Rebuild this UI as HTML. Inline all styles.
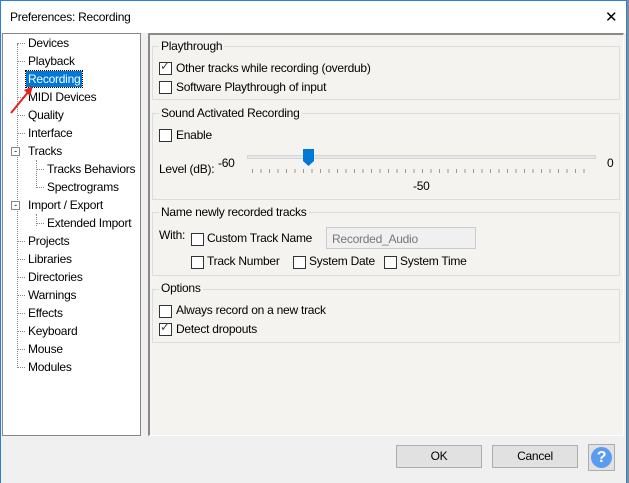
<!DOCTYPE html>
<html><head><style>
*{margin:0;padding:0;box-sizing:border-box}
body{width:629px;height:483px;background:#8a8a8a;font-family:"Liberation Sans",sans-serif;font-size:12px;letter-spacing:-0.25px;color:#000;position:relative;overflow:hidden}
.win{position:absolute;left:0;top:0;width:627px;height:483px;background:#f0f0f0;border:1px solid #2b7fd6;border-bottom:none}
.title{position:absolute;left:0;top:0;width:625px;height:32px;background:#fff}
.a{position:absolute;white-space:nowrap}
.tree{position:absolute;left:1px;top:32px;width:139px;height:403px;background:#fff;border:1px solid #828790}
.panel{position:absolute;left:147px;top:32px;width:476px;height:403px;background:#f4f3f0;border-top:2px solid #8a8a8a;border-left:2px solid #8a8a8a;border-right:1px solid #fff;border-bottom:1px solid #fff}
.grp{position:absolute;border:1px solid #dcdcdc}
.gl{position:absolute;background:#f4f3f0;padding:0 2px}
.cb{position:absolute;width:13px;height:13px;border:1px solid #333;background:#fff}
.dl{position:absolute;border-left:1px dotted #888}
.dh{position:absolute;border-top:1px dotted #888;width:8px}
.btn{position:absolute;height:23px;background:#e1e1e1;border:1px solid #adadad;text-align:center;line-height:21px}
</style></head><body>
<div class="win">
<div class="title"><div class="a" style="left:9px;top:9px;font-size:12px">Preferences: Recording</div>
<div class="a" style="left:604px;top:7px;font-size:15px">✕</div></div>
<div class="tree">
<div class="dl" style="left:14px;top:10px;height:324px"></div>
<div class="dl" style="left:33px;top:126px;height:28px"></div>
<div class="dl" style="left:33px;top:180px;height:12px"></div>
</div>
<div class="dh" style="left:16px;top:42px"></div><div class="dh" style="left:16px;top:60px"></div><div class="dh" style="left:16px;top:96px"></div><div class="dh" style="left:16px;top:114px"></div><div class="dh" style="left:16px;top:132px"></div><div class="dh" style="left:35px;top:168px"></div><div class="dh" style="left:35px;top:186px"></div><div class="dh" style="left:35px;top:222px"></div><div class="dh" style="left:16px;top:240px"></div><div class="dh" style="left:16px;top:258px"></div><div class="dh" style="left:16px;top:276px"></div><div class="dh" style="left:16px;top:294px"></div><div class="dh" style="left:16px;top:312px"></div><div class="dh" style="left:16px;top:330px"></div><div class="dh" style="left:16px;top:348px"></div><div class="dh" style="left:16px;top:366px"></div>
<div class="a" style="left:10px;top:146px;width:9px;height:9px;border:1px solid #888;background:#fff;font-size:9px;line-height:6px;text-align:center">-</div>
<div class="a" style="left:10px;top:200px;width:9px;height:9px;border:1px solid #888;background:#fff;font-size:9px;line-height:6px;text-align:center">-</div>
<div class="a" style="left:27px;top:35px">Devices</div>
<div class="a" style="left:27px;top:53px">Playback</div>
<div class="a" style="left:25px;top:70px;background:#0078d7;color:#fff;padding:1px 2px;outline:1px dotted #000">Recording</div>
<div class="a" style="left:27px;top:89px">MIDI Devices</div>
<div class="a" style="left:27px;top:107px">Quality</div>
<div class="a" style="left:27px;top:125px">Interface</div>
<div class="a" style="left:27px;top:143px">Tracks</div>
<div class="a" style="left:46px;top:161px">Tracks Behaviors</div>
<div class="a" style="left:46px;top:179px">Spectrograms</div>
<div class="a" style="left:27px;top:197px">Import / Export</div>
<div class="a" style="left:46px;top:215px">Extended Import</div>
<div class="a" style="left:27px;top:233px">Projects</div>
<div class="a" style="left:27px;top:251px">Libraries</div>
<div class="a" style="left:27px;top:269px">Directories</div>
<div class="a" style="left:27px;top:287px">Warnings</div>
<div class="a" style="left:27px;top:305px">Effects</div>
<div class="a" style="left:27px;top:323px">Keyboard</div>
<div class="a" style="left:27px;top:341px">Mouse</div>
<div class="a" style="left:27px;top:359px">Modules</div>
<svg class="a" style="left:8px;top:84px" width="26" height="30"><line x1="2" y1="28" x2="20" y2="6" stroke="#e52020" stroke-width="2"/><polygon points="24,1 15,5 21,11" fill="#e52020"/></svg>
<div class="panel"></div>
<div class="grp" style="left:151px;top:45px;width:468px;height:54px"></div>
<div class="gl a" style="left:158px;top:38px">Playthrough</div>
<div class="cb" style="left:158px;top:61px"></div><div class="a" style="left:159px;top:58px;color:#444;font-size:12px">✓</div>
<div class="a" style="left:175px;top:60px">Other tracks while recording (overdub)</div>
<div class="cb" style="left:158px;top:80px"></div><div class="a" style="left:175px;top:79px">Software Playthrough of input</div>
<div class="grp" style="left:151px;top:112px;width:468px;height:87px"></div>
<div class="gl a" style="left:158px;top:105px">Sound Activated Recording</div>
<div class="cb" style="left:158px;top:128px"></div><div class="a" style="left:175px;top:127px">Enable</div>
<div class="a" style="left:158px;top:161px">Level (dB):</div>
<div class="a" style="left:217px;top:155px">-60</div>
<div class="a" style="left:606px;top:155px">0</div>
<div class="a" style="left:246px;top:154px;width:349px;height:4px;background:#e7e7e7;border:1px solid #d6d6d6"></div>
<div class="a" style="left:251px;top:168px;width:340px;height:4px;background:repeating-linear-gradient(90deg,#999 0 1px,transparent 1px 8.5px)"></div>
<svg class="a" style="left:302px;top:148px" width="11" height="17"><path d="M0 0H11V12L5.5 17L0 12Z" fill="#0078d7"/></svg>
<div class="a" style="left:412px;top:178px">-50</div>
<div class="grp" style="left:151px;top:211px;width:468px;height:64px"></div>
<div class="gl a" style="left:158px;top:204px">Name newly recorded tracks</div>
<div class="a" style="left:158px;top:227px">With:</div>
<div class="cb" style="left:190px;top:232px"></div><div class="a" style="left:206px;top:230px">Custom Track Name</div>
<div class="a" style="left:325px;top:226px;width:150px;height:22px;background:#f0f0f0;border:1px solid #ccc;color:#777;padding:4px 5px">Recorded_Audio</div>
<div class="cb" style="left:190px;top:255px"></div><div class="a" style="left:206px;top:253px">Track Number</div>
<div class="cb" style="left:292px;top:255px"></div><div class="a" style="left:308px;top:253px">System Date</div>
<div class="cb" style="left:383px;top:255px"></div><div class="a" style="left:399px;top:253px">System Time</div>
<div class="grp" style="left:151px;top:288px;width:468px;height:54px"></div>
<div class="gl a" style="left:158px;top:280px">Options</div>
<div class="cb" style="left:158px;top:304px"></div><div class="a" style="left:175px;top:302px">Always record on a new track</div>
<div class="cb" style="left:158px;top:322px"></div><div class="a" style="left:159px;top:319px;color:#444">✓</div>
<div class="a" style="left:175px;top:321px">Detect dropouts</div>
<div class="btn" style="left:395px;top:444px;width:86px">OK</div>
<div class="btn" style="left:491px;top:444px;width:86px">Cancel</div>
<div class="a" style="left:587px;top:443px;width:27px;height:27px;background:#e1e1e1;border:1px solid #adadad"></div>
<div class="a" style="left:590px;top:446px;width:21px;height:21px;border-radius:50%;background:#5b9cf0;color:#fff;font-weight:bold;font-size:16px;text-align:center;line-height:21px">?</div>
</div>
</body></html>
